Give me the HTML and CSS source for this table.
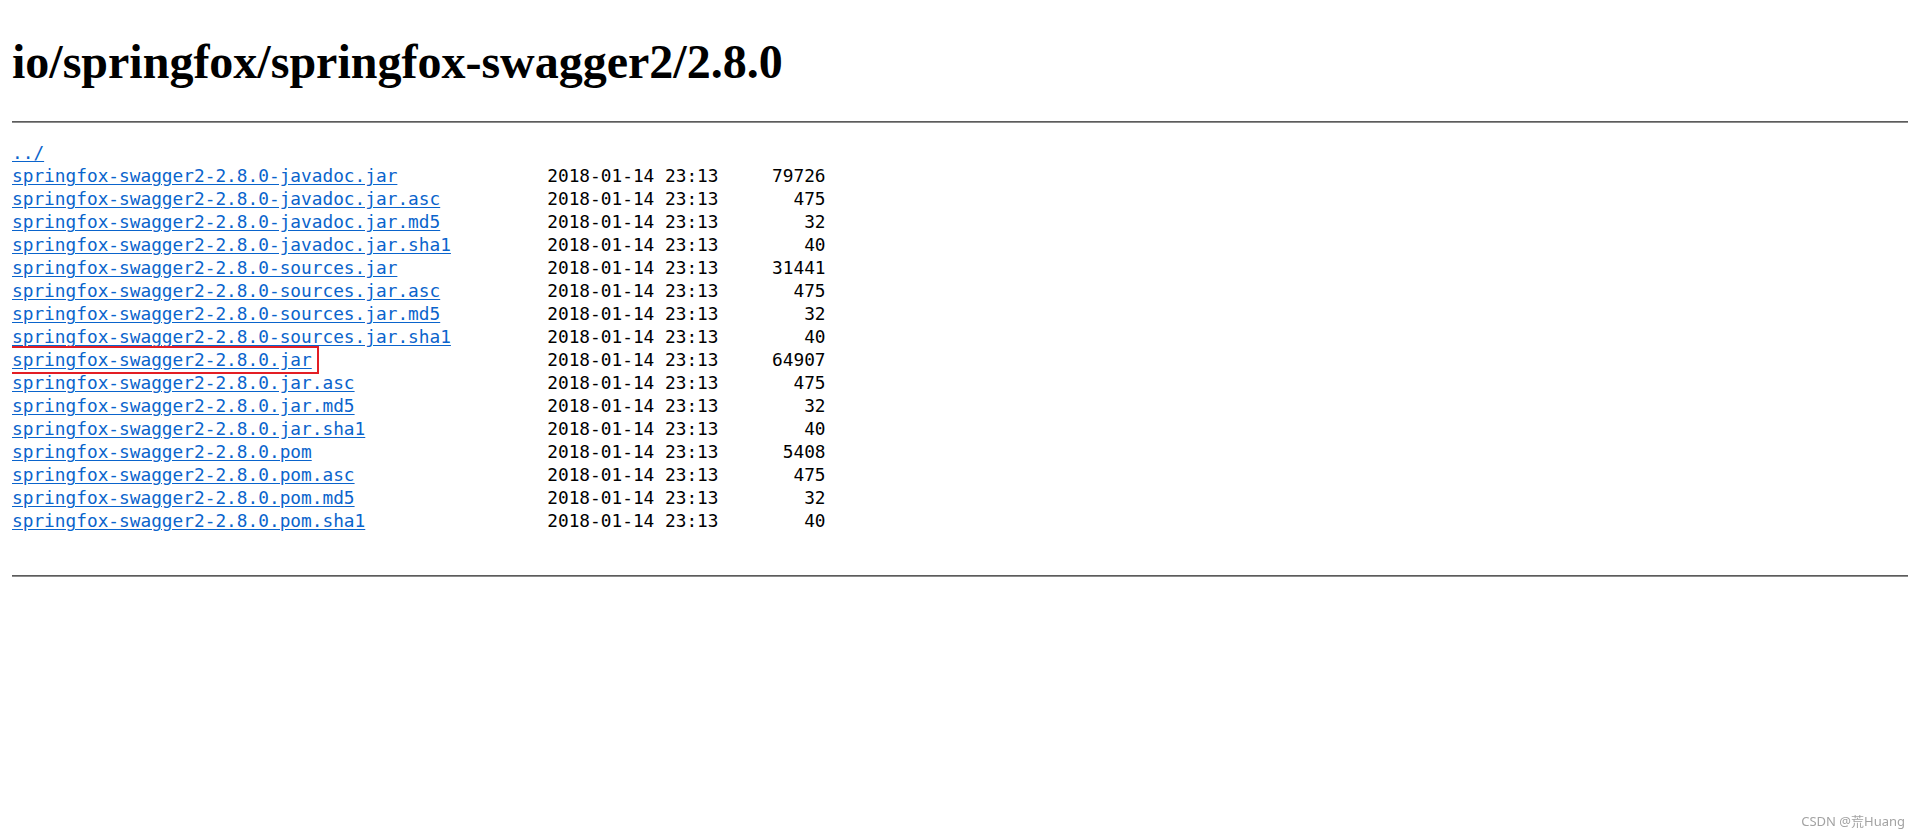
FILE: index.html
```html
<!DOCTYPE html>
<html lang="en">
<head>
    <meta charset="UTF-8">
    <title>Central Repository: io/springfox/springfox-swagger2/2.8.0</title>
    <link rel="stylesheet" href="styles.css">
</head>
<body>
    <h1>io/springfox/springfox-swagger2/2.8.0</h1>
    <hr>
    <div class="listing">
        <div class="row"><a href="../">../</a></div>
        <div class="row"><span class="name"><a href="#">springfox-swagger2-2.8.0-javadoc.jar</a></span><span class="date">2018-01-14 23:13</span><span class="size">79726</span></div>
        <div class="row"><span class="name"><a href="#">springfox-swagger2-2.8.0-javadoc.jar.asc</a></span><span class="date">2018-01-14 23:13</span><span class="size">475</span></div>
        <div class="row"><span class="name"><a href="#">springfox-swagger2-2.8.0-javadoc.jar.md5</a></span><span class="date">2018-01-14 23:13</span><span class="size">32</span></div>
        <div class="row"><span class="name"><a href="#">springfox-swagger2-2.8.0-javadoc.jar.sha1</a></span><span class="date">2018-01-14 23:13</span><span class="size">40</span></div>
        <div class="row"><span class="name"><a href="#">springfox-swagger2-2.8.0-sources.jar</a></span><span class="date">2018-01-14 23:13</span><span class="size">31441</span></div>
        <div class="row"><span class="name"><a href="#">springfox-swagger2-2.8.0-sources.jar.asc</a></span><span class="date">2018-01-14 23:13</span><span class="size">475</span></div>
        <div class="row"><span class="name"><a href="#">springfox-swagger2-2.8.0-sources.jar.md5</a></span><span class="date">2018-01-14 23:13</span><span class="size">32</span></div>
        <div class="row"><span class="name"><a href="#">springfox-swagger2-2.8.0-sources.jar.sha1</a></span><span class="date">2018-01-14 23:13</span><span class="size">40</span></div>
        <div class="row"><span class="name"><span class="marked"><a href="#">springfox-swagger2-2.8.0.jar</a></span></span><span class="date">2018-01-14 23:13</span><span class="size">64907</span></div>
        <div class="row"><span class="name"><a href="#">springfox-swagger2-2.8.0.jar.asc</a></span><span class="date">2018-01-14 23:13</span><span class="size">475</span></div>
        <div class="row"><span class="name"><a href="#">springfox-swagger2-2.8.0.jar.md5</a></span><span class="date">2018-01-14 23:13</span><span class="size">32</span></div>
        <div class="row"><span class="name"><a href="#">springfox-swagger2-2.8.0.jar.sha1</a></span><span class="date">2018-01-14 23:13</span><span class="size">40</span></div>
        <div class="row"><span class="name"><a href="#">springfox-swagger2-2.8.0.pom</a></span><span class="date">2018-01-14 23:13</span><span class="size">5408</span></div>
        <div class="row"><span class="name"><a href="#">springfox-swagger2-2.8.0.pom.asc</a></span><span class="date">2018-01-14 23:13</span><span class="size">475</span></div>
        <div class="row"><span class="name"><a href="#">springfox-swagger2-2.8.0.pom.md5</a></span><span class="date">2018-01-14 23:13</span><span class="size">32</span></div>
        <div class="row"><span class="name"><a href="#">springfox-swagger2-2.8.0.pom.sha1</a></span><span class="date">2018-01-14 23:13</span><span class="size">40</span></div>
        <div class="row"></div>
    </div>
    <hr>
    <div class="watermark">CSDN @荒Huang</div>
</body>
</html>
```

FILE: styles.css
```css
body {
    margin: 12px;
    background: #fff;
    color: #000;
    font-family: 'Liberation Serif', serif;
}
h1 { font-size: 48px; font-weight: 700; margin: 22px 0 32px; }
hr { border: none; border-top: 1px solid #5c5c5c; border-bottom: 1px solid #8c8c8c; height: 0; margin: 12px 0; }
.listing { font-family: 'DejaVu Sans Mono', monospace; font-size: 17.8px; line-height: 23px; margin: 18px 0 19.5px; }
.row { display: grid; grid-template-columns: 50ch 16ch 10ch; height: 23px; white-space: pre; }
.row a { color: #0a64cc; text-decoration: underline; text-underline-offset: 2px; }
.size { text-align: right; }
.marked { position: relative; }
.marked::after { content: ''; position: absolute; left: -7px; right: -7px; top: -3px; bottom: -4px; border: 2px solid #e31e24; }
.watermark { position: fixed; right: 15px; bottom: 9px; font-family: 'Noto Sans', 'Noto Sans CJK SC', sans-serif; font-size: 13px; color: #a3a3a3; }
```
